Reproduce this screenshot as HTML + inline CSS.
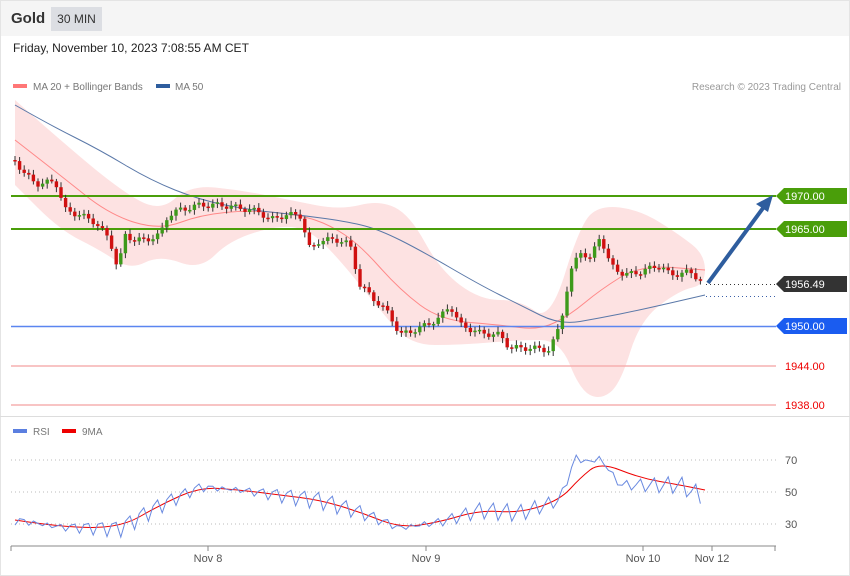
<!DOCTYPE html><html><head><meta charset="utf-8"><style>
body{margin:0;width:850px;height:576px;background:#fff;font-family:"Liberation Sans",sans-serif;overflow:hidden;position:relative}
.hdr{position:absolute;left:0;top:0;width:850px;height:36px;background:#f5f5f5}
.t{position:absolute;white-space:nowrap}
</style></head><body>
<div class="hdr"></div>
<div class="t" style="left:11px;top:10px;font-size:15px;font-weight:bold;color:#333">Gold</div>
<div class="t" style="left:51px;top:7px;width:51px;height:24px;background:#dcdee3;font-size:12px;color:#333;line-height:24px;text-align:center">30 MIN</div>
<div class="t" style="left:13px;top:41px;font-size:12px;color:#222">Friday, November 10, 2023 7:08:55 AM CET</div>
<svg id="s" width="850" height="576" style="position:absolute;left:0;top:0" font-family="Liberation Sans, sans-serif">
<rect x="0.5" y="0.5" width="849" height="575" fill="none" stroke="#e4e4e4"/>
<line x1="0" y1="416.5" x2="850" y2="416.5" stroke="#ddd"/>
<rect x="13" y="84" width="14" height="4" fill="#f77"/><text x="33" y="90" font-size="10" fill="#777">MA 20 + Bollinger Bands</text>
<rect x="156" y="84" width="14" height="4" fill="#2e5d9e"/><text x="175" y="90" font-size="10" fill="#777">MA 50</text>
<text x="841" y="90" font-size="10" fill="#999" text-anchor="end">Research © 2023 Trading Central</text>
<rect x="13" y="429" width="14" height="4" fill="#5b7fe0"/><text x="33" y="435" font-size="10" fill="#777">RSI</text>
<rect x="62" y="429" width="14" height="4" fill="#e00"/><text x="82" y="435" font-size="10" fill="#777">9MA</text>
<path id="band" fill="#fde2e2"/>
<path id="ma20" fill="none" stroke="#f88" stroke-width="1"/>
<path id="ma50" fill="none" stroke="#5a78a8" stroke-width="1"/>
<line x1="11" y1="196" x2="776" y2="196" stroke="#4a9e0a" stroke-width="2"/>
<line x1="11" y1="229" x2="776" y2="229" stroke="#4a9e0a" stroke-width="2"/>
<line x1="11" y1="326.5" x2="776" y2="326.5" stroke="#5b86f0" stroke-width="1.5"/>
<line x1="11" y1="366" x2="776" y2="366" stroke="#f6b0b0" stroke-width="1.5"/>
<line x1="11" y1="405" x2="776" y2="405" stroke="#f6b0b0" stroke-width="1.5"/>
<line x1="706" y1="284.5" x2="776" y2="284.5" stroke="#333" stroke-dasharray="1,3"/>
<line x1="706" y1="296.5" x2="776" y2="296.5" stroke="#3a5fa8" stroke-dasharray="1,3"/>
<g id="c"></g>
<line x1="708" y1="283" x2="766" y2="204" stroke="#2e5d9e" stroke-width="4"/>
<polygon points="773,195 756,204 768,212" fill="#2e5d9e"/>
<polygon points="776,196 784,188 847,188 847,204 784,204" fill="#4a9e0a"/><text x="785" y="200" font-size="11" fill="#fff">1970.00</text>
<polygon points="776,229 784,221 847,221 847,237 784,237" fill="#4a9e0a"/><text x="785" y="233" font-size="11" fill="#fff">1965.00</text>
<polygon points="776,284 784,276 847,276 847,292 784,292" fill="#333"/><text x="785" y="288" font-size="11" fill="#fff">1956.49</text>
<polygon points="776,326 784,318 847,318 847,334 784,334" fill="#1a5cf0"/><text x="785" y="330" font-size="11" fill="#fff">1950.00</text>
<text x="785" y="370" font-size="11" fill="#e00">1944.00</text>
<text x="785" y="409" font-size="11" fill="#e00">1938.00</text>
<g stroke="#bbb" stroke-dasharray="1,3"><line x1="11" y1="460" x2="776" y2="460"/><line x1="11" y1="492" x2="776" y2="492"/><line x1="11" y1="524" x2="776" y2="524"/></g>
<text x="785" y="464" font-size="11" fill="#555">70</text><text x="785" y="496" font-size="11" fill="#555">50</text><text x="785" y="528" font-size="11" fill="#555">30</text>
<path id="rma" fill="none" stroke="#e00" stroke-width="1"/>
<polyline id="rsi" fill="none" stroke="#6a8ae0" stroke-width="1"/>
<line x1="11" y1="546" x2="776" y2="546" stroke="#888"/>
<g stroke="#888"><line x1="11" y1="546" x2="11" y2="551"/><line x1="208" y1="546" x2="208" y2="551"/><line x1="426" y1="546" x2="426" y2="551"/><line x1="643" y1="546" x2="643" y2="551"/><line x1="712" y1="546" x2="712" y2="551"/><line x1="775" y1="546" x2="775" y2="551"/></g>
<g font-size="11" fill="#555" text-anchor="middle"><text x="208" y="562">Nov 8</text><text x="426" y="562">Nov 9</text><text x="643" y="562">Nov 10</text><text x="712" y="562">Nov 12</text></g>
</svg>
<script>
function sm(p,close){var d='M'+p[0][0]+','+p[0][1];for(var i=1;i<p.length-1;i++){var mx=(p[i][0]+p[i+1][0])/2,my=(p[i][1]+p[i+1][1])/2;d+=' Q'+p[i][0]+','+p[i][1]+' '+mx+','+my;}var l=p[p.length-1];d+=' L'+l[0]+','+l[1];return d+(close?'Z':'');}
var up=[[15,100],[60,140],[120,190],[160,212],[190,185],[240,190],[290,200],[340,210],[380,200],[410,215],[440,270],[480,300],[520,300],[550,322],[580,225],[600,205],[640,210],[680,235],[705,255]];
var lo=[[705,285],[680,290],[640,320],[620,385],[600,400],[580,390],[560,340],[520,340],[460,345],[410,345],[380,310],[340,260],[310,230],[280,225],[230,240],[200,270],[160,255],[130,270],[100,250],[60,230],[15,185]];
document.getElementById('band').setAttribute('d',sm(up.concat(lo),true));
document.getElementById('ma20').setAttribute('d',sm([[15,140],[60,175],[110,215],[160,230],[200,215],[250,210],[300,215],[330,225],[360,245],[400,290],[440,320],[500,325],[540,330],[570,315],[600,290],[640,265],[705,270]]));
document.getElementById('ma50').setAttribute('d',sm([[15,105],[50,125],[100,150],[150,180],[200,200],[250,210],[300,215],[350,222],[380,230],[420,250],[480,285],[520,305],[560,325],[600,318],[640,310],[705,295]]));
document.getElementById('rma').setAttribute('d',sm([[15,520],[60,527],[120,528],[160,505],[200,487],[240,490],[280,495],[320,500],[360,512],[400,528],[440,522],[480,510],[520,513],[560,500],[580,478],[600,462],[640,478],[680,485],[705,490]]));
var P=[[15,160],[25,175],[40,185],[55,180],[65,210],[80,215],[95,222],[110,240],[118,270],[125,235],[135,240],[145,240],[160,235],[168,215],[180,210],[200,205],[220,205],[240,208],[260,212],[270,220],[285,215],[300,215],[310,250],[320,240],[340,240],[350,245],[360,285],[375,300],[390,315],[400,335],[420,328],[440,318],[450,305],[460,325],[480,333],[500,335],[510,348],[530,348],[550,350],[560,325],[570,275],[580,250],[590,260],[600,235],[610,265],[625,275],[640,272],[660,265],[670,275],[690,272],[705,283]];
function f(x){for(var i=1;i<P.length;i++)if(x<=P[i][0]){var a=P[i-1],b=P[i];return a[1]+(b[1]-a[1])*(x-a[0])/(b[0]-a[0]);}return 283;}
var g=document.getElementById('c'),h='',prev=f(15);
for(var x=15;x<=704;x+=4.6){var c=f(x)+Math.sin(x*1.7)*3,o=prev;var col=c<o?'#3d9a1a':'#d01010';var t=Math.min(o,c)-2-Math.abs(Math.sin(x))*3,b=Math.max(o,c)+2+Math.abs(Math.cos(x))*3;
h+='<line x1="'+x+'" y1="'+t+'" x2="'+x+'" y2="'+b+'" stroke="#333" stroke-width="1"/><rect x="'+(x-1.7)+'" y="'+Math.min(o,c)+'" width="3.4" height="'+Math.max(1.5,Math.abs(c-o))+'" fill="'+col+'"/>';prev=c;}
g.innerHTML=h;
var R=[[15,520],[60,527],[120,528],[160,505],[200,487],[240,490],[280,495],[320,500],[360,512],[400,528],[440,522],[480,510],[520,513],[560,500],[575,458],[590,462],[600,458],[620,485],[640,485],[680,485],[705,498]];
function r(x){for(var i=1;i<R.length;i++)if(x<=R[i][0]){var a=R[i-1],b=R[i];return a[1]+(b[1]-a[1])*(x-a[0])/(b[0]-a[0]);}return 498;}
var pts=[];for(var x=15;x<=705;x+=4.6)pts.push(x+','+(r(x)+Math.sin(x*0.9)*6+Math.sin(x*2.3)*4).toFixed(1));
document.getElementById('rsi').setAttribute('points',pts.join(' '));
</script>
</body></html>
